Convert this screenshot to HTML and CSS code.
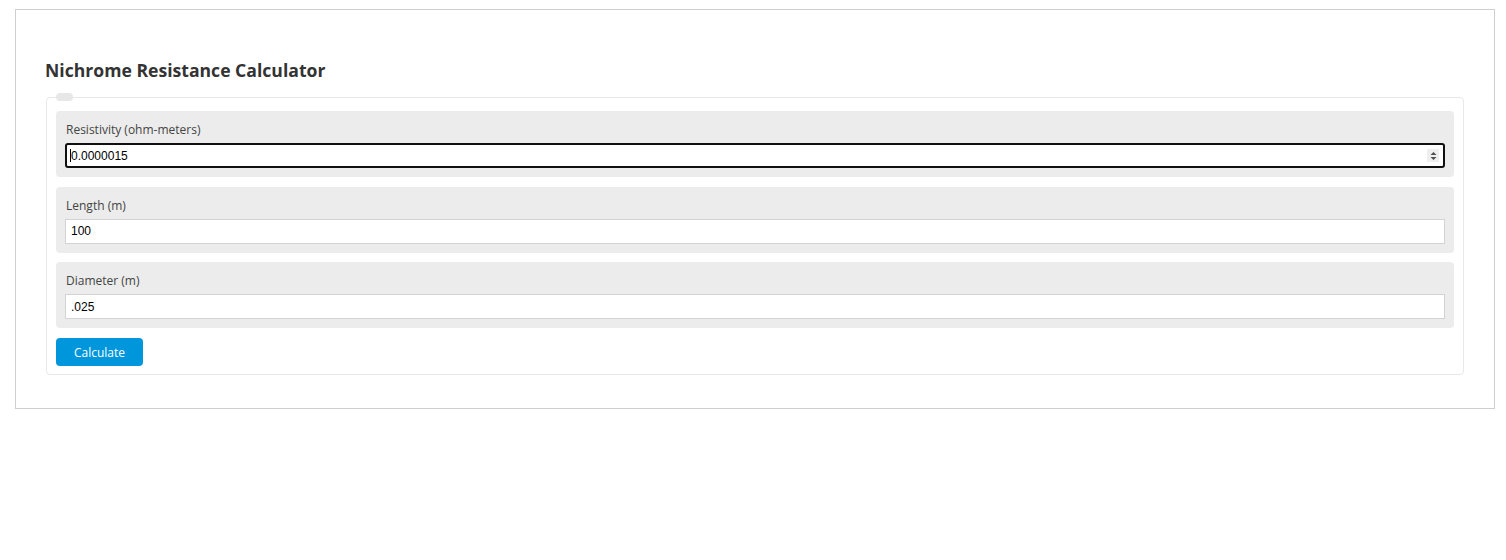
FILE: index.html
```html
<!DOCTYPE html>
<html>
<head>
<meta charset="utf-8">
<title>Nichrome Resistance Calculator</title>
<link rel="stylesheet" href="styles.css">
</head>
<body>
<div class="calc">
  <h2 class="calc-title">Nichrome Resistance Calculator</h2>
  <fieldset class="calc-set">
    <legend class="calc-legend"></legend>
    <div class="field">
      <label class="field-label" for="rho">Resistivity (ohm-meters)</label>
      <div class="input-wrap">
        <input class="field-input is-focused" id="rho" type="text" value="0.0000015">
        <span class="caret"></span>
        <span class="spinner">
          <svg width="7" height="10" viewBox="0 0 7 10"><path d="M3.5 1 L6.5 4 L0.5 4 Z" fill="#505050"/><path d="M3.5 9 L6.5 6 L0.5 6 Z" fill="#505050"/></svg>
        </span>
      </div>
    </div>
    <div class="field">
      <label class="field-label" for="len">Length (m)</label>
      <div class="input-wrap">
        <input class="field-input" id="len" type="text" value="100">
      </div>
    </div>
    <div class="field">
      <label class="field-label" for="dia">Diameter (m)</label>
      <div class="input-wrap">
        <input class="field-input" id="dia" type="text" value=".025">
      </div>
    </div>
    <button class="calc-btn" type="button">Calculate</button>
  </fieldset>
</div>
</body>
</html>
```
FILE: styles.css
```css
html, body {
  margin: 0;
  padding: 0;
  background: #fff;
}
body {
  font-family: "Open Sans", "Noto Sans", sans-serif;
  color: #333;
}
.calc {
  box-sizing: border-box;
  margin: 9px 0 0 15px;
  width: 1480px;
  height: 400px;
  border: 1px solid #cfcfd2;
  padding: 48px 30px 0 30px;
}
.calc-title {
  margin: 0 0 11px -1px;
  font-size: 17.6px;
  line-height: 24px;
  font-weight: 700;
  color: #333;
}
.calc-set {
  margin: 0;
  border: 1px solid #e8e8e8;
  border-radius: 4px;
  padding: 10px 9px 8px 9px;
}
.calc-legend {
  height: 8px;
  width: 17px;
  padding: 0;
  margin-left: 0;
  background: #e6e7e6;
  border-radius: 4px;
}
.field {
  background: #ebeceb;
  border-radius: 4px;
  padding: 11px 9px 9px 9px;
  margin-bottom: 9.5px;
}
.field-label {
  display: block;
  font-size: 12px;
  line-height: 16px;
  color: #444;
  margin: 0 0 5px 1px;
}
.input-wrap {
  position: relative;
}
.field-input {
  display: block;
  box-sizing: border-box;
  width: 100%;
  height: 25px;
  margin: 0;
  border: 1px solid #d3d3d3;
  background: #fff;
  padding: 0 5px;
  font-family: "Liberation Sans", Arial, sans-serif;
  font-size: 12px;
  color: #000;
  outline: none;
}
.field-input.is-focused {
  border: 2px solid #101010;
  border-radius: 3px;
  padding: 0 4px;
}
.caret {
  position: absolute;
  left: 5px;
  top: 6px;
  width: 1px;
  height: 13px;
  background: #000;
}
.spinner {
  position: absolute;
  right: 6px;
  top: 6px;
  width: 12px;
  height: 13px;
  background: #efefef;
  display: flex;
  align-items: center;
  justify-content: center;
}
.spinner svg {
  display: block;
}
.calc-btn {
  display: block;
  margin-top: 10px;
  width: 87px;
  height: 28px;
  border: none;
  border-radius: 4px;
  background: #0096db;
  color: #fff;
  font-family: "Open Sans", "Noto Sans", sans-serif;
  font-size: 12px;
  padding: 0;
  cursor: pointer;
}
```
